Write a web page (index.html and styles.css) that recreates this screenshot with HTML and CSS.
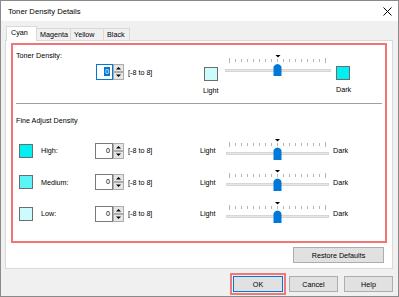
FILE: index.html
```html
<!DOCTYPE html>
<html lang="en">
  <head>
    <meta charset="UTF-8" />
    <title>Toner Density Details</title>
    <link rel="stylesheet" href="styles.css">
  </head>
  <body>
    <div class="window">
      <div class="titlebar">
        <span class="title">Toner Density Details</span>
        <svg class="close" width="9" height="9" viewBox="0 0 9 9">
          <path d="M0.5 0.5L8.5 8.5M8.5 0.5L0.5 8.5" stroke="#000" stroke-width="1" fill="none" />
        </svg>
      </div>

      <div class="body">
        <div class="tabs">
          <div class="tab selected">Cyan</div>
          <div class="tab">Magenta</div>
          <div class="tab">Yellow</div>
          <div class="tab">Black</div>
        </div>

        <div class="panel">
          <div class="frame">
            <div class="main-density">
              <div class="left-col">
                <div class="section-title">Toner Density:</div>
                <div class="spin-row top-spin">
                  <div class="spin">
                    <div class="spin-input focused"><span class="sel">0</span></div>
                    <svg class="spin-btns" width="11" height="16" viewBox="0 0 11 16">
                      <rect x="0.5" y="0.5" width="10" height="7" fill="#e6e6e6" stroke="#adadad" />
                      <rect x="0.5" y="8.5" width="10" height="7" fill="#e6e6e6" stroke="#adadad" />
                      <path d="M3 5.5h5l-2.5-2.5z" fill="#000" />
                      <path d="M3 10.5h5l-2.5 2.5z" fill="#000" />
                    </svg>
                  </div>
                  <span class="range">[-8 to 8]</span>
                </div>
              </div>
              <div class="swatch-col light-col">
                <div class="swatch low"></div>
                <span>Light</span>
              </div>
              <svg class="slider top-slider" width="106" height="24" viewBox="0 0 106 24">
                <path d="M50.5 1h5l-2.5 2.5z" fill="#000" />
                <path d="M4.5 4v5M10.5 5v3M16.5 5v3M22.5 5v3M28.5 5v3M34.5 5v3M40.5 5v3M46.5 5v3M52.5 5v3M58.5 5v3M64.5 5v3M70.5 5v3M76.5 5v3M82.5 5v3M88.5 5v3M94.5 5v3M100.5 4v5" stroke="#b4b4b4" stroke-width="1" />
                <rect x="0.5" y="15.5" width="105" height="2" fill="#e7e7e7" stroke="#d6d6d6" />
                <path d="M48.5 22V13.5Q48.5 11 52.5 10Q56.5 11 56.5 13.5V22Z" fill="#0078d7" />
              </svg>
              <div class="swatch-col dark-col">
                <div class="swatch dark"></div>
                <span>Dark</span>
              </div>
            </div>

            <div class="fine">
              <div class="section-title">Fine Adjust Density</div>

              <div class="fine-row">
                <div class="swatch dark"></div>
                <span>High:</span>
                <div class="spin">
                  <div class="spin-input">0</div>
                  <svg class="spin-btns" width="11" height="16" viewBox="0 0 11 16">
                    <rect x="0.5" y="0.5" width="10" height="7" fill="#e6e6e6" stroke="#adadad" />
                    <rect x="0.5" y="8.5" width="10" height="7" fill="#e6e6e6" stroke="#adadad" />
                    <path d="M3 5.5h5l-2.5-2.5z" fill="#000" />
                    <path d="M3 10.5h5l-2.5 2.5z" fill="#000" />
                  </svg>
                </div>
                <span>[-8 to 8]</span>
                <span>Light</span>
                <svg class="slider" width="103" height="24" viewBox="0 0 103 24">
                  <path d="M49 1h5l-2.5 2.5z" fill="#000" />
                  <path d="M3.5 4v5M9.5 5v3M15.5 5v3M21.5 5v3M27.5 5v3M33.5 5v3M39.5 5v3M45.5 5v3M51.5 5v3M57.5 5v3M63.5 5v3M69.5 5v3M75.5 5v3M81.5 5v3M87.5 5v3M93.5 5v3M99.5 4v5" stroke="#b4b4b4" stroke-width="1" />
                  <rect x="0.5" y="14.5" width="102" height="2" fill="#e7e7e7" stroke="#d6d6d6" />
                  <path d="M47.5 22V13Q47.5 10.5 51.5 9.5Q55.5 10.5 55.5 13V22Z" fill="#0078d7" />
                </svg>
                <span class="dark-label">Dark</span>
              </div>

              <div class="fine-row">
                <div class="swatch medium"></div>
                <span>Medium:</span>
                <div class="spin">
                  <div class="spin-input">0</div>
                  <svg class="spin-btns" width="11" height="16" viewBox="0 0 11 16">
                    <rect x="0.5" y="0.5" width="10" height="7" fill="#e6e6e6" stroke="#adadad" />
                    <rect x="0.5" y="8.5" width="10" height="7" fill="#e6e6e6" stroke="#adadad" />
                    <path d="M3 5.5h5l-2.5-2.5z" fill="#000" />
                    <path d="M3 10.5h5l-2.5 2.5z" fill="#000" />
                  </svg>
                </div>
                <span>[-8 to 8]</span>
                <span>Light</span>
                <svg class="slider" width="103" height="24" viewBox="0 0 103 24">
                  <path d="M49 1h5l-2.5 2.5z" fill="#000" />
                  <path d="M3.5 4v5M9.5 5v3M15.5 5v3M21.5 5v3M27.5 5v3M33.5 5v3M39.5 5v3M45.5 5v3M51.5 5v3M57.5 5v3M63.5 5v3M69.5 5v3M75.5 5v3M81.5 5v3M87.5 5v3M93.5 5v3M99.5 4v5" stroke="#b4b4b4" stroke-width="1" />
                  <rect x="0.5" y="14.5" width="102" height="2" fill="#e7e7e7" stroke="#d6d6d6" />
                  <path d="M47.5 22V13Q47.5 10.5 51.5 9.5Q55.5 10.5 55.5 13V22Z" fill="#0078d7" />
                </svg>
                <span class="dark-label">Dark</span>
              </div>

              <div class="fine-row">
                <div class="swatch low"></div>
                <span>Low:</span>
                <div class="spin">
                  <div class="spin-input">0</div>
                  <svg class="spin-btns" width="11" height="16" viewBox="0 0 11 16">
                    <rect x="0.5" y="0.5" width="10" height="7" fill="#e6e6e6" stroke="#adadad" />
                    <rect x="0.5" y="8.5" width="10" height="7" fill="#e6e6e6" stroke="#adadad" />
                    <path d="M3 5.5h5l-2.5-2.5z" fill="#000" />
                    <path d="M3 10.5h5l-2.5 2.5z" fill="#000" />
                  </svg>
                </div>
                <span>[-8 to 8]</span>
                <span>Light</span>
                <svg class="slider" width="103" height="24" viewBox="0 0 103 24">
                  <path d="M49 1h5l-2.5 2.5z" fill="#000" />
                  <path d="M3.5 4v5M9.5 5v3M15.5 5v3M21.5 5v3M27.5 5v3M33.5 5v3M39.5 5v3M45.5 5v3M51.5 5v3M57.5 5v3M63.5 5v3M69.5 5v3M75.5 5v3M81.5 5v3M87.5 5v3M93.5 5v3M99.5 4v5" stroke="#b4b4b4" stroke-width="1" />
                  <rect x="0.5" y="14.5" width="102" height="2" fill="#e7e7e7" stroke="#d6d6d6" />
                  <path d="M47.5 22V13Q47.5 10.5 51.5 9.5Q55.5 10.5 55.5 13V22Z" fill="#0078d7" />
                </svg>
                <span class="dark-label">Dark</span>
              </div>
            </div>
          </div>

          <div class="restore-row">
            <button class="btn restore">Restore Defaults</button>
          </div>
        </div>

        <div class="footer">
          <button class="btn ok">OK</button>
          <button class="btn">Cancel</button>
          <button class="btn">Help</button>
        </div>
      </div>
    </div>
  </body>
</html>
```

FILE: styles.css
```css
body {
  margin: 0;
  font-family: "Liberation Sans", Arial, sans-serif;
  font-size: 7.2px;
  color: #000;
  background: #fff;
}

.window {
  width: 399px;
  height: 297px;
  box-sizing: border-box;
  border: 1px solid #8a8a8a;
  background: #f0f0f0;
  display: flex;
  flex-direction: column;
}

.titlebar {
  height: 20px;
  background: #fff;
  display: flex;
  align-items: center;
  justify-content: space-between;
  padding: 0 6px 0 7px;
}
.title {
  font-size: 7.7px;
}

.body {
  flex-grow: 1;
  display: flex;
  flex-direction: column;
  padding: 6px 5px 0 4px;
}

/* tabs */
.tabs {
  display: flex;
  height: 13px;
  padding-left: 1px;
  align-items: flex-end;
}
.tab {
  height: 11px;
  line-height: 11px;
  padding: 0 3px;
  border: 1px solid #d9d9d9;
  border-bottom: none;
  margin-right: -1px;
  background: #f0f0f0;
}
.tab:nth-child(2) { width: 27px; }
.tab:nth-child(3) { width: 26px; }
.tab:nth-child(4) { width: 19px; }
.tab.selected {
  width: 22px;
  height: 14px;
  line-height: 12px;
  margin-bottom: -1px;
  background: #fff;
  position: relative;
  z-index: 1;
  padding-left: 4px;
}

.panel {
  height: 229px;
  box-sizing: border-box;
  background: #fff;
  border: 1px solid #d9d9d9;
  padding: 2px 5px 0 5px;
}

.frame {
  height: 200px;
  box-sizing: border-box;
  border: 2px solid #f27474;
}

.section-title {
  padding-left: 3px;
  height: 10px;
  line-height: 10px;
}

/* main density row */
.main-density {
  display: flex;
  align-items: flex-start;
  height: 58px;
  margin: 0 3px;
  border-bottom: 1px solid #a0a0a0;
}
.left-col {
  width: 187px;
  padding-top: 6px;
}
.left-col .section-title {
  padding-left: 0;
}
.spin-row {
  display: flex;
  align-items: center;
  margin-top: 3px;
  margin-left: 80px;
}
.range {
  margin-left: 4px;
}

.swatch-col {
  display: flex;
  flex-direction: column;
  align-items: flex-start;
  gap: 5px;
}
.light-col {
  width: 22px;
  margin-top: 22px;
}
.light-col .swatch {
  margin-left: 1px;
}
.top-slider {
  margin-top: 9px;
}
.dark-col {
  margin-top: 21px;
  margin-left: 5px;
}

.swatch {
  width: 14px;
  height: 14px;
  box-sizing: border-box;
  border: 1px solid #6d6d6d;
}
.swatch.dark { background: #00f0f0; }
.swatch.medium { background: #5cf4f4; }
.swatch.low { background: #cdfafa; }

/* spin box */
.spin {
  display: flex;
}
.spin-input {
  width: 18px;
  height: 16px;
  box-sizing: border-box;
  border: 1px solid #7a7a7a;
  text-align: right;
  line-height: 14px;
  padding-right: 2px;
}
.spin-input.focused {
  width: 17px;
  border-color: #0078d7;
}
.sel {
  background: #0078d7;
  color: #fff;
  padding: 0 1px;
}

/* fine adjust */
.fine {
  padding-top: 12px;
}
.fine .section-title {
  margin-bottom: 9px;
}
.fine-row {
  display: grid;
  grid-template-columns: 22px 54px 33px 72px 26px 103px auto;
  align-items: center;
  height: 31.5px;
  padding-left: 6px;
}
.fine-row .slider {
  margin-top: -2px;
}
.dark-label {
  margin-left: 4px;
}

/* buttons */
.btn {
  font-family: inherit;
  font-size: inherit;
  color: #000;
  background: #e1e1e1;
  border: 1px solid #adadad;
  height: 16px;
  padding: 0;
  box-sizing: border-box;
}
.restore-row {
  display: flex;
  justify-content: flex-end;
  padding: 4px 3px 0 0;
}
.restore {
  width: 91px;
}

.footer {
  display: flex;
  justify-content: flex-end;
  gap: 6px;
  padding-top: 7px;
}
.footer .btn {
  width: 49px;
}
.footer .ok {
  width: 50px;
  border-color: #0078d7;
  outline: 2px solid #f07878;
  outline-offset: 1px;
}
```
